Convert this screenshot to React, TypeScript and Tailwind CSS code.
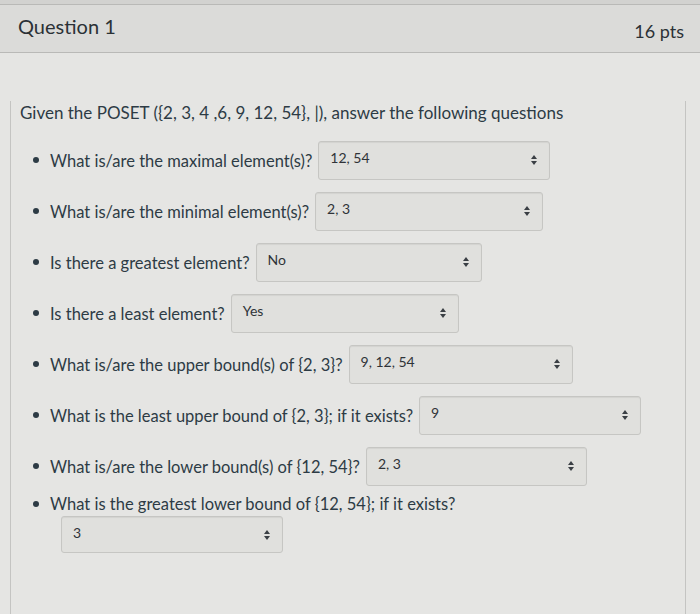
import React from "react";

const rows: { q: string; a: string; w: number }[] = [
  { q: "What is/are the maximal element(s)?", a: "12, 54", w: 232 },
  { q: "What is/are the minimal element(s)?", a: "2, 3", w: 228 },
  { q: "Is there a greatest element?", a: "No", w: 226 },
  { q: "Is there a least element?", a: "Yes", w: 228 },
  { q: "What is/are the upper bound(s) of {2, 3}?", a: "9, 12, 54", w: 224 },
  { q: "What is the least upper bound of {2, 3}; if it exists?", a: "9", w: 222 },
  { q: "What is/are the lower bound(s) of {12, 54}?", a: "2, 3", w: 221 },
];

function Arrows() {
  return (
    <svg width="8" height="12" viewBox="0 0 8 12" className="shrink-0">
      <path d="M4 1 L7 5 L1 5 Z" fill="#3a3f44" />
      <path d="M4 11 L7 7 L1 7 Z" fill="#3a3f44" />
    </svg>
  );
}

function Select({ value, w, h = 39 }: { value: string; w: number; h?: number }) {
  return (
    <div
      className="flex items-center justify-between rounded-[3px] border border-[#c6c6c3] bg-[#e0e0dd] pl-[11px] pr-[11px] shadow-[inset_0_1px_1px_rgba(0,0,0,0.06)]"
      style={{ width: w, height: h }}
    >
      <span className="-mt-[5px] text-[14px] text-[#2f3338]">{value}</span>
      <Arrows />
    </div>
  );
}

function Bullet() {
  return <span className="mr-[11px] h-[6px] w-[6px] shrink-0 rounded-full bg-[#2d3b45]" />;
}

export default function App() {
  return (
    <div
      className="h-[614px] w-[700px] overflow-hidden bg-[#e5e5e3] text-[#2d3b45]"
      style={{ fontFamily: "Lato, 'Open Sans', sans-serif" }}
    >
      <div className="h-[4px] bg-[#d2d2d0]" />
      <div className="flex h-[49px] items-center justify-between border-y border-[#b9b9b7] bg-[#dbdbd9] pl-[18px] pr-[16px]">
        <span className="-mt-[5px] text-[20px] text-[#2b3136]">Question 1</span>
        <span className="mt-[6px] text-[18px] text-[#2b3136]">16 pts</span>
      </div>
      <div className="ml-[10px] h-[559px] w-[676px] border-x border-b border-[#c4c4c2] pl-[9px]">
        <div className="mt-[48px] text-[17px] leading-[24px]">
          Given the POSET ({"{"}2, 3, 4 ,6, 9, 12, 54{"}"}, |), answer the following questions
        </div>
        <div className="mt-[15px] flex flex-col gap-[11px] pl-[13px]">
          {rows.map((r, i) => (
            <div key={i} className="flex h-[40px] items-center">
              <Bullet />
              <span className="mt-[2px] text-[16.5px]">{r.q}</span>
              <div className="ml-[6px]">
                <Select value={r.a} w={r.w} />
              </div>
            </div>
          ))}
          <div className="-mt-[5px]">
            <div className="flex h-[24px] items-center">
              <Bullet />
              <span className="text-[16.5px]">What is the greatest lower bound of {"{"}12, 54{"}"}; if it exists?</span>
            </div>
            <div className="ml-[28px] mt-[0px]">
              <Select value="3" w={222} h={37} />
            </div>
          </div>
        </div>
      </div>
    </div>
  );
}
